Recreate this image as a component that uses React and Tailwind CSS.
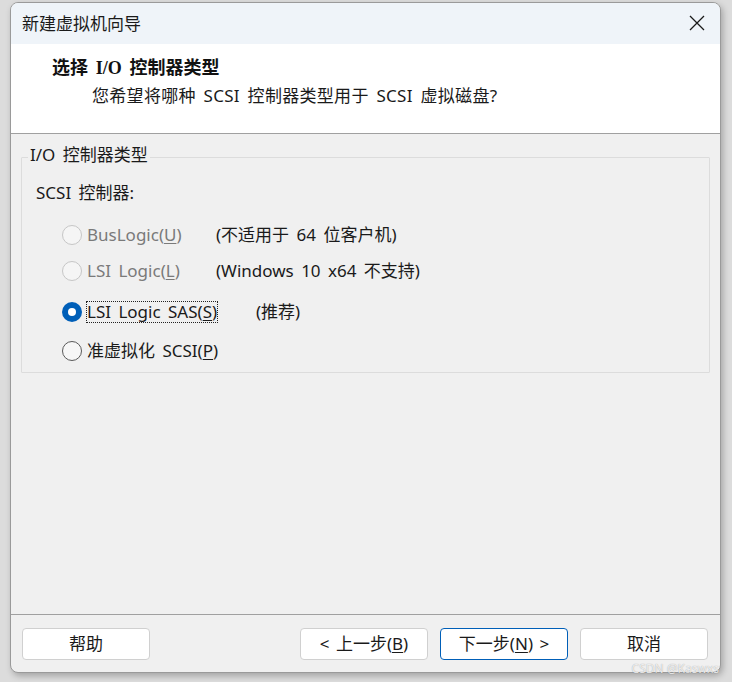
import React from "react";

const font = { fontFamily: '"Noto Sans", "Noto Sans CJK SC", sans-serif', wordSpacing: "3px" };

function Radio({ state }) {
  if (state === "checked") {
    return (
      <span className="flex h-[20px] w-[20px] items-center justify-center rounded-full bg-[#005fb8]">
        <span className="h-[8px] w-[8px] rounded-full bg-white" />
      </span>
    );
  }
  if (state === "disabled") {
    return <span className="h-[20px] w-[20px] rounded-full border border-[#c6c6c6] bg-[#f5f5f5]" />;
  }
  return <span className="h-[20px] w-[20px] rounded-full border border-[#5a5a5a] bg-[#f7f7f7]" />;
}

function Option({ state, label, ul, note, noteX, focus }) {
  const color = state === "disabled" ? "text-[#7a7a7a]" : "text-[#1a1a1a]";
  return (
    <div className="flex h-[20px] items-center">
      <div className="ml-[40px] flex items-center">
        <Radio state={state} />
      </div>
      <span
        className={`ml-[5px] ${color} text-[17px] leading-[20px] ${focus ? "outline outline-1 outline-dotted outline-[#222]" : ""}`}
      >
        {label}(<span className="underline underline-offset-2">{ul}</span>)
      </span>
      {note && (
        <span className="absolute text-[17px] leading-[20px] text-[#1a1a1a]" style={{ left: noteX }}>
          {note}
        </span>
      )}
    </div>
  );
}

function Btn({ children, primary }) {
  return (
    <div
      className={`flex h-[32px] w-[128px] items-center justify-center rounded-[4px] bg-white text-[17px] text-[#1a1a1a] ${
        primary ? "border border-[#005fb8]" : "border border-[#d0d0d0]"
      }`}
    >
      {children}
    </div>
  );
}

export default function App() {
  return (
    <div className="relative h-[682px] w-[732px] overflow-hidden bg-[#dcdcdc]" style={font}>
      <div className="ml-[10px] mt-[2px] flex h-[671px] w-[711px] flex-col overflow-hidden rounded-[8px] border border-[#9a9a9a] bg-[#f0f0f0] shadow-[2px_3px_6px_rgba(0,0,0,0.25)]">
        {/* title bar */}
        <div className="flex h-[41px] shrink-0 items-center justify-between bg-[#eff4f9] pl-[11px] pr-[15px]">
          <span className="text-[17px] text-[#1a1a1a]">新建虚拟机向导</span>
          <svg width="16" height="16" viewBox="0 0 16 16" className="mb-[2px]">
            <path d="M1 1 L15 15 M15 1 L1 15" stroke="#1a1a1a" strokeWidth="1.3" fill="none" />
          </svg>
        </div>
        {/* header */}
        <div className="h-[90px] shrink-0 border-b border-[#a0a0a0] bg-white">
          <div className="pl-[41px] pt-[11px] text-[18px] font-bold leading-[24px] text-[#111]">
            选择 <span style={{ fontFamily: '"Liberation Serif", serif' }}>I/O</span> 控制器类型
          </div>
          <div className="pl-[81px] pt-[4px] text-[17px] leading-[24px] tracking-[0.3px] text-[#1a1a1a]">
            您希望将哪种 SCSI 控制器类型用于 SCSI 虚拟磁盘?
          </div>
        </div>
        {/* body */}
        <div className="relative flex flex-1 flex-col px-[10px] pt-[23px]">
          <div className="relative h-[216px] rounded-[1px] border border-[#dcdcdc]">
            <span className="absolute left-[6px] top-[-13px] bg-[#f0f0f0] px-[2px] text-[17px] leading-[20px] text-[#1a1a1a]">
              I/O 控制器类型
            </span>
            <div className="pl-[14px] pt-[25px] text-[17px] leading-[20px] text-[#1a1a1a]">SCSI 控制器:</div>
            <div className="relative mt-[22px] flex flex-col gap-[16px]">
              <div className="relative">
                <Option state="disabled" label="BusLogic" ul="U" note="(不适用于 64 位客户机)" noteX={194} />
              </div>
              <div className="relative">
                <Option state="disabled" label="LSI Logic" ul="L" note="(Windows 10 x64 不支持)" noteX={194} />
              </div>
              <div className="relative mt-[5px]">
                <Option state="checked" label="LSI Logic SAS" ul="S" note="(推荐)" noteX={234} focus />
              </div>
              <div className="relative mt-[3px]">
                <Option state="normal" label="准虚拟化 SCSI" ul="P" />
              </div>
            </div>
          </div>
          <div className="flex-1" />
          <div className="mx-[-10px] border-t border-[#a0a0a0]" />
          <div className="ml-[1px] mr-[2px] flex h-[57px] items-start pt-[13px] [word-spacing:2px]">
            <Btn>帮助</Btn>
            <div className="flex-1" />
            <Btn>&lt; 上一步(<span className="underline underline-offset-2">B</span>)</Btn>
            <div className="w-[12px]" />
            <Btn primary>下一步(<span className="underline underline-offset-2">N</span>) &gt;</Btn>
            <div className="w-[12px]" />
            <Btn>取消</Btn>
          </div>
        </div>
      </div>
      <span className="absolute bottom-[7px] right-[13px] text-[12px] leading-[12px] text-white/80 [word-spacing:0px] [text-shadow:0_0_1px_rgba(0,0,0,0.4)]">
        CSDN @Kaswxs
      </span>
    </div>
  );
}
